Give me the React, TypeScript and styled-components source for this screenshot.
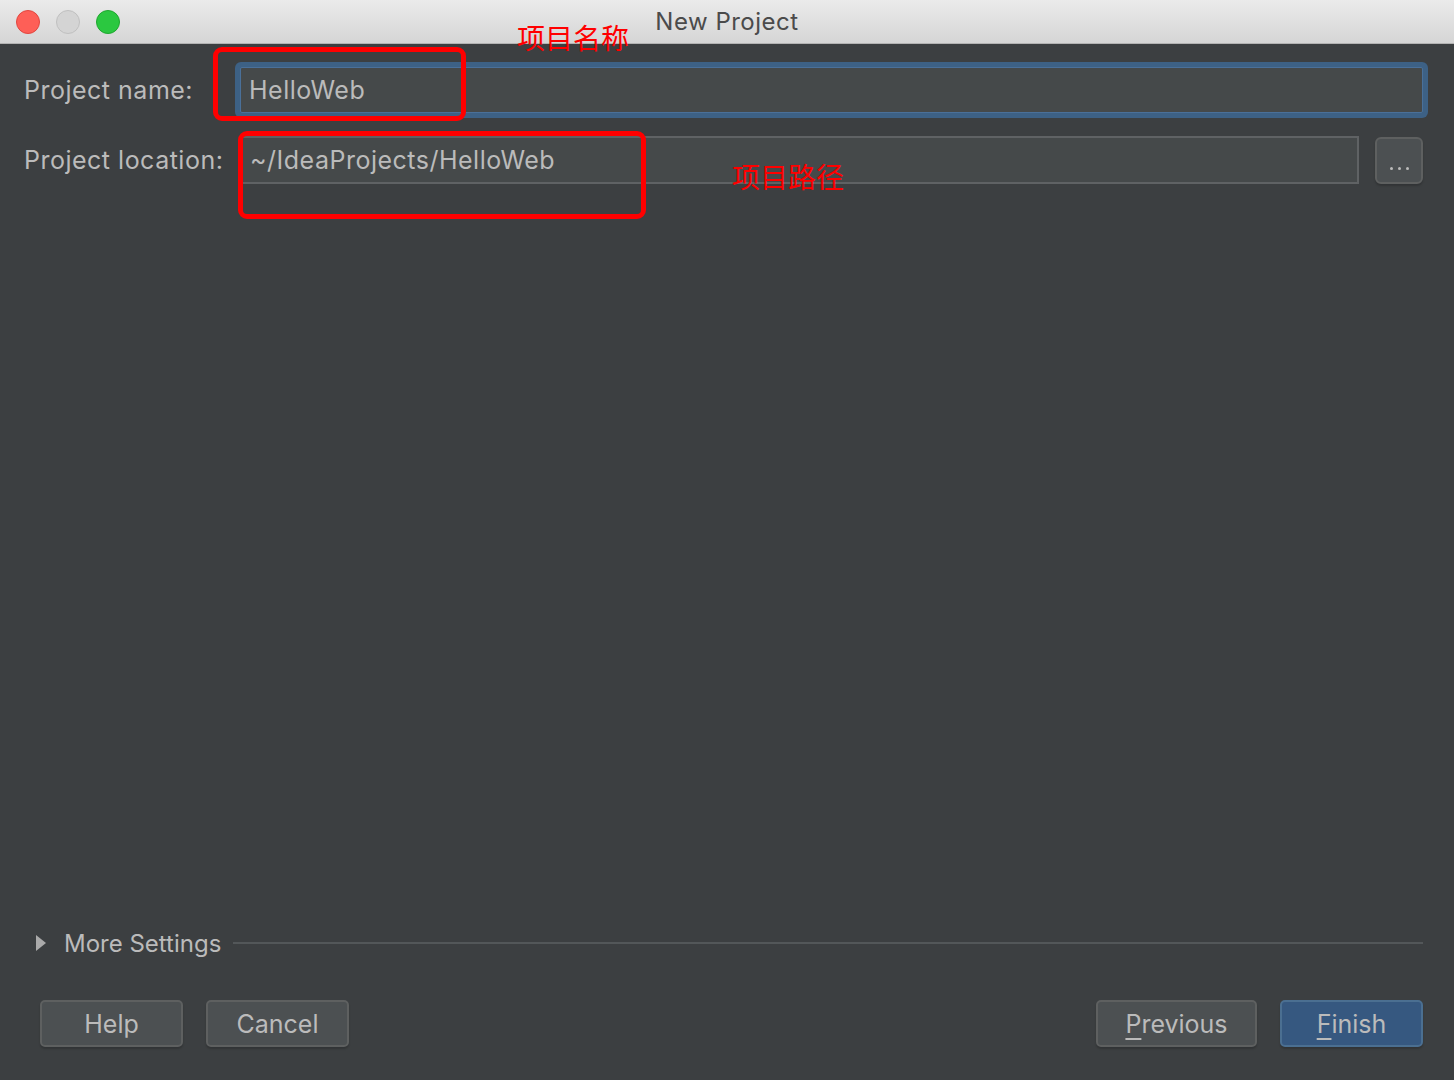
import React from "react";
import styled, { createGlobalStyle } from "styled-components";

const GlobalStyle = createGlobalStyle`
  html, body {
    margin: 0;
    padding: 0;
    background: #3c3f41;
  }
  * {
    box-sizing: border-box;
  }
`;

const uiFont = `"Inter", "Noto Sans", "Liberation Sans", sans-serif`;

const Window = styled.div`
  position: relative;
  width: 1454px;
  height: 1080px;
  display: flex;
  flex-direction: column;
  font-family: ${uiFont};
  overflow: hidden;
`;

const TitleBar = styled.div`
  height: 44px;
  flex: none;
  display: flex;
  align-items: center;
  position: relative;
  background: linear-gradient(#ebebeb, #d5d5d5);
  border-bottom: 1px solid #b3b3b3;
  padding-left: 16px;
`;

const Lights = styled.div`
  display: flex;
  gap: 16px;
`;

const Light = styled.span<{ $fill: string; $edge: string }>`
  width: 24px;
  height: 24px;
  border-radius: 50%;
  background: ${p => p.$fill};
  border: 1px solid ${p => p.$edge};
`;

const Title = styled.div`
  position: absolute;
  left: 0;
  right: 0;
  top: 0;
  bottom: 0;
  display: flex;
  align-items: center;
  justify-content: center;
  font-size: 24px;
  letter-spacing: 0.5px;
  color: #4b4b4b;
  pointer-events: none;
`;

const Body = styled.div`
  flex: 1;
  display: flex;
  flex-direction: column;
  padding: 23px 31px 33px 24px;
  background: #3c3f41;
`;

const FormGrid = styled.div`
  display: grid;
  grid-template-columns: 216px 1fr;
  row-gap: 23px;
  align-items: center;
`;

const Label = styled.label`
  font-size: 25px;
  letter-spacing: 0.5px;
  color: #bbbbbb;
`;

const TextField = styled.div<{ $focused?: boolean }>`
  height: ${p => (p.$focused ? 46 : 48)}px;
  flex: 1;
  display: flex;
  align-items: center;
  padding-left: 8px;
  background: #45494a;
  font-size: 25px;
  letter-spacing: 0.5px;
  color: #bbbbbb;
  border: ${p => (p.$focused ? "1px solid #4a7099" : "2px solid #5f6264")};
  border-radius: ${p => (p.$focused ? 2 : 0)}px;
  box-shadow: ${p => (p.$focused ? "0 0 0 5px #3d6185" : "none")};
`;

const FieldRow = styled.div`
  display: flex;
  gap: 16px;
  align-items: center;
`;

const BrowseButton = styled.div`
  width: 48px;
  height: 47px;
  flex: none;
  display: flex;
  align-items: center;
  justify-content: center;
  gap: 5px;
  background: #4c5052;
  border: 2px solid #5e6060;
  border-radius: 6px;
  padding-top: 16px;
  box-shadow: 0 2px 2px rgba(0, 0, 0, 0.18);
`;

const Dot = styled.span`
  width: 3px;
  height: 3px;
  border-radius: 50%;
  background: #bbbbbb;
`;

const Spacer = styled.div`
  flex: 1;
`;

const SettingsRow = styled.div`
  height: 28px;
  display: flex;
  align-items: center;
  margin-bottom: 43px;
`;

const Triangle = styled.span`
  width: 0;
  height: 0;
  margin-left: 12px;
  margin-right: 18px;
  border-top: 8px solid transparent;
  border-bottom: 8px solid transparent;
  border-left: 10px solid #aaaaaa;
`;

const SettingsText = styled.span`
  font-size: 24px;
  color: #bbbbbb;
`;

const Rule = styled.div`
  flex: 1;
  height: 2px;
  margin-left: 12px;
  background: #535759;
`;

const ButtonBar = styled.div`
  display: flex;
  align-items: center;
  padding-left: 16px;
`;

const ButtonGroup = styled.div`
  display: flex;
  gap: 23px;
`;

const Button = styled.div<{ $width: number; $primary?: boolean }>`
  width: ${p => p.$width}px;
  height: 47px;
  display: flex;
  align-items: center;
  justify-content: center;
  font-size: 25px;
  color: #bbbbbb;
  background: ${p => (p.$primary ? "#365880" : "#4c5052")};
  border: 2px solid ${p => (p.$primary ? "#4b6f91" : "#5e6060")};
  border-radius: 5px;
  box-shadow: 0 2px 2px rgba(0, 0, 0, 0.18);
`;

const Mnemonic = styled.span`
  text-decoration: underline;
  text-decoration-thickness: 2px;
  text-underline-offset: 5px;
`;

const Marker = styled.div<{ $left: number; $top: number; $w: number; $h: number }>`
  position: absolute;
  left: ${p => p.$left}px;
  top: ${p => p.$top}px;
  width: ${p => p.$w}px;
  height: ${p => p.$h}px;
  border: 5px solid #ff0000;
  border-radius: 9px;
  pointer-events: none;
`;

const Note = styled.div<{ $left: number; $top: number }>`
  position: absolute;
  left: ${p => p.$left}px;
  top: ${p => p.$top}px;
  font-family: "Noto Sans CJK SC", sans-serif;
  font-size: 28px;
  line-height: 1;
  color: #ff0000;
  pointer-events: none;
`;

const App = () => {
  return (
    <>
      <GlobalStyle />
      <Window>
        <TitleBar>
          <Lights>
            <Light $fill="#fe5f57" $edge="#e2463f" />
            <Light $fill="#d4d4d4" $edge="#c0c0c0" />
            <Light $fill="#2bc840" $edge="#1fa72f" />
          </Lights>
          <Title>New Project</Title>
        </TitleBar>
        <Body>
          <FormGrid>
            <Label>Project name:</Label>
            <TextField $focused>HelloWeb</TextField>
            <Label>Project location:</Label>
            <FieldRow>
              <TextField>~/IdeaProjects/HelloWeb</TextField>
              <BrowseButton>
                <Dot />
                <Dot />
                <Dot />
              </BrowseButton>
            </FieldRow>
          </FormGrid>
          <Spacer />
          <SettingsRow>
            <Triangle />
            <SettingsText>More Settings</SettingsText>
            <Rule />
          </SettingsRow>
          <ButtonBar>
            <ButtonGroup>
              <Button $width={143}>Help</Button>
              <Button $width={143}>Cancel</Button>
            </ButtonGroup>
            <Spacer />
            <ButtonGroup>
              <Button $width={161}>
                <Mnemonic>P</Mnemonic>revious
              </Button>
              <Button $width={143} $primary>
                <Mnemonic>F</Mnemonic>inish
              </Button>
            </ButtonGroup>
          </ButtonBar>
        </Body>
        <Marker $left={213} $top={47} $w={253} $h={74} />
        <Marker $left={238} $top={131} $w={408} $h={88} />
        <Note $left={517} $top={23}>项目名称</Note>
        <Note $left={732} $top={162}>项目路径</Note>
      </Window>
    </>
  );
};

export default App;
